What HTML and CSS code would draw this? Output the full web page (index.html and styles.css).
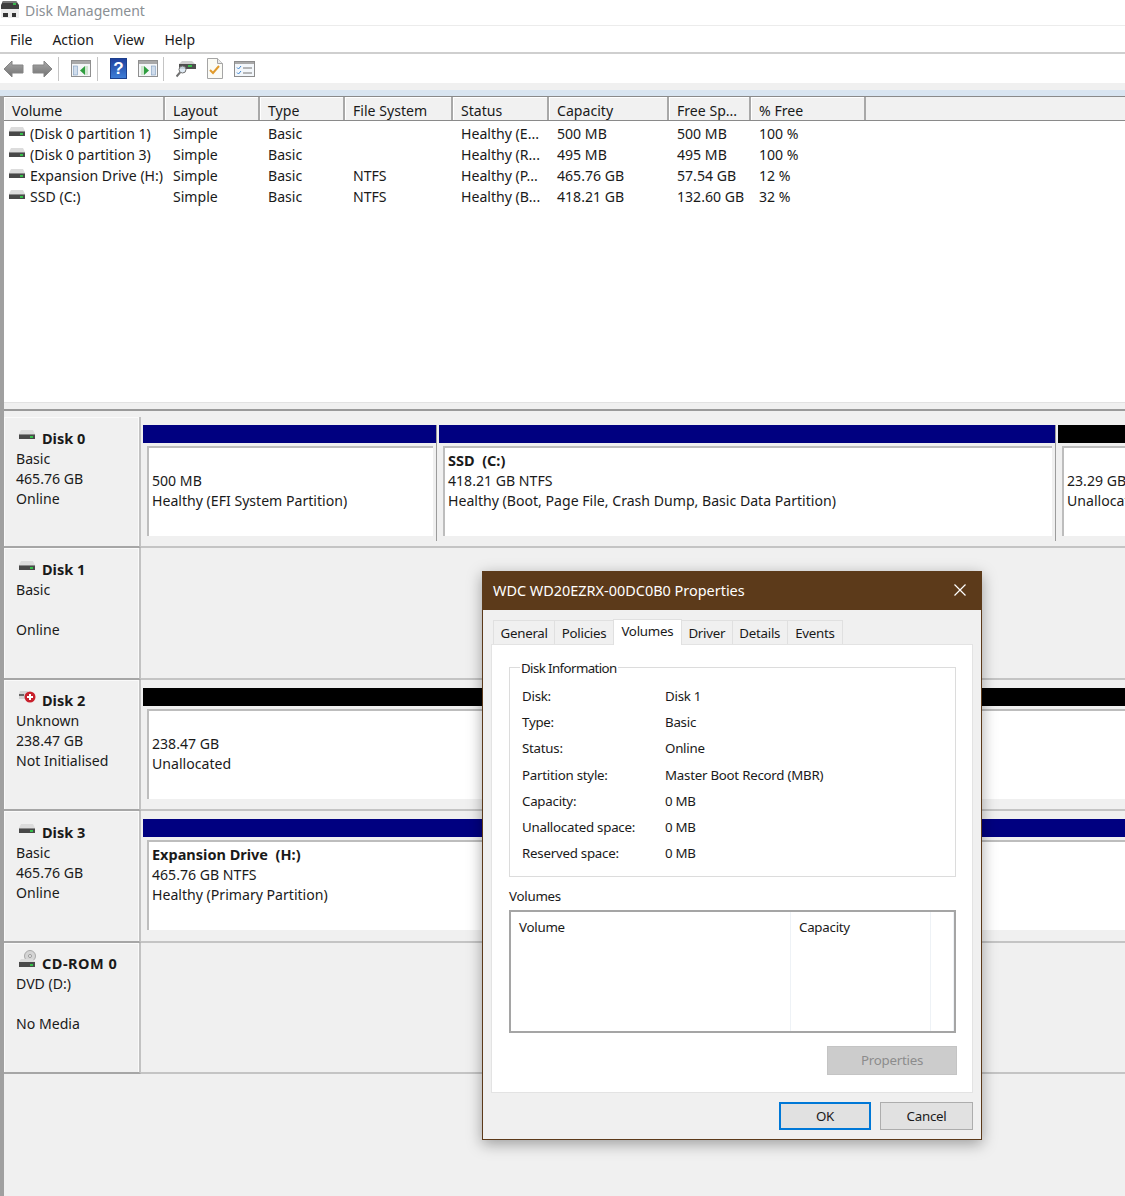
FILE: index.html
```html
<!DOCTYPE html>
<html lang="en">

<head>
    <meta charset="UTF-8">
    <meta name="viewport" content="width=device-width, initial-scale=1.0">
    <title>Disk Management</title>
    <link rel="stylesheet" href="styles.css">
</head>

<body>
    <svg class="defs" width="0" height="0">
        <defs>
            <linearGradient id="arrowfill" x1="0" y1="0" x2="0" y2="1">
                <stop offset="0" stop-color="#a8a8a8" />
                <stop offset="1" stop-color="#717171" />
            </linearGradient>
            <linearGradient id="helpfill" x1="0" y1="0" x2="0" y2="1">
                <stop offset="0" stop-color="#1e3f9c" />
                <stop offset="1" stop-color="#3f7fd8" />
            </linearGradient>
        </defs>
        <symbol id="disk" viewBox="0 0 18 12">
            <path d="M3 1h12l2 4H1z" fill="#dcdcdc" />
            <rect x="1" y="5" width="16" height="5" fill="#484848" />
            <rect x="1" y="5" width="16" height="1" fill="#8a8a8a" />
            <rect x="12" y="7" width="3" height="2" fill="#35c04a" />
        </symbol>
    </svg>

    <div class="titlebar">
        <svg class="appicon" width="20" height="19" viewBox="0 0 20 19">
            <path d="M3 1h13l3 4v4H1V5z" fill="#3f3f3f" />
            <path d="M3 1h13l1.500 2H2z" fill="#777" />
            <rect x="13" y="3" width="3" height="2" fill="#38b84c" />
            <rect x="1" y="9" width="18" height="9" fill="#ececec" />
            <rect x="3" y="13" width="5" height="4" fill="#333" />
            <rect x="12" y="13" width="4" height="4" fill="#333" />
        </svg>
        <span>Disk Management</span>
    </div>

    <div class="menubar">
        <span>File</span>
        <span>Action</span>
        <span>View</span>
        <span>Help</span>
    </div>

    <div class="toolbar">
        <div class="toolgroup arrows">
            <svg width="21" height="18" viewBox="0 0 21 18">
                <path d="M1 9l8-8v4h11v8H9v4z" fill="url(#arrowfill)" stroke="#858585" stroke-linejoin="round" />
            </svg>
            <svg width="21" height="18" viewBox="0 0 21 18">
                <path d="M20 9l-8-8v4H1v8h11v4z" fill="url(#arrowfill)" stroke="#858585" stroke-linejoin="round" />
            </svg>
        </div>
        <i class="sep"></i>
        <div class="toolgroup single">
            <svg width="20" height="17" viewBox="0 0 20 17">
                <rect x=".5" y=".5" width="19" height="16" fill="#f4f6f8" stroke="#8f8f8f" />
                <rect x="1" y="1" width="18" height="3" fill="#a9a9a9" />
                <rect x="2.500" y="6" width="4" height="9" fill="#cfdcec" stroke="#7f9dbf" stroke-width=".6" />
                <path d="M14 6v9l-5-4.500z" fill="#2f9e3f" />
                <rect x="14" y="6" width="3" height="9" fill="#cfe6cf" />
            </svg>
        </div>
        <i class="sep"></i>
        <div class="toolgroup">
            <svg width="17" height="21" viewBox="0 0 17 21">
                <rect x=".5" y=".5" width="16" height="20" fill="url(#helpfill)" stroke="#1c3f8c" />
                <text x="8.500" y="16" class="helpmark">?</text>
            </svg>
            <svg width="20" height="17" viewBox="0 0 20 17">
                <rect x=".5" y=".5" width="19" height="16" fill="#f4f6f8" stroke="#8f8f8f" />
                <rect x="1" y="1" width="18" height="3" fill="#a9a9a9" />
                <rect x="13.500" y="6" width="4" height="9" fill="#cfdcec" stroke="#7f9dbf" stroke-width=".6" />
                <rect x="3" y="6" width="3" height="9" fill="#cfe6cf" />
                <path d="M6 6v9l5-4.500z" fill="#2f9e3f" />
            </svg>
        </div>
        <i class="sep"></i>
        <div class="toolgroup">
            <svg width="20" height="19" viewBox="0 0 20 19">
                <path d="M6 2h10l3 3H3z" fill="#cfcfcf" />
                <rect x="3" y="5" width="17" height="5" fill="#4f4f4f" />
                <rect x="12" y="6" width="4" height="2" fill="#35c04a" />
                <circle cx="6.500" cy="10.500" r="3.500" fill="#dbe7f3" fill-opacity=".85" stroke="#707070" />
                <path d="M4 13.500L.5 17.500" stroke="#707070" stroke-width="2" />
            </svg>
            <svg width="16" height="21" viewBox="0 0 16 21">
                <path d="M.5.500h10l5 5v15H.5z" fill="#fbfbf6" stroke="#a5a5a5" />
                <path d="M10.500.500v5h5" fill="#e8e8e8" stroke="#a5a5a5" />
                <path d="M3 12l3 3 6-7" fill="none" stroke="#e09a2b" stroke-width="2" />
            </svg>
            <svg width="21" height="16" viewBox="0 0 21 16">
                <rect x=".5" y=".5" width="20" height="15" fill="#f3f7fb" stroke="#8c8c8c" />
                <rect x="1" y="1" width="19" height="2" fill="#a9a9a9" />
                <path d="M3 6.500l1.500 1.500L7 5M3 11.500l1.500 1.500L7 10" fill="none" stroke="#3f86d0" />
                <path d="M9 7h9M9 12h9" stroke="#777" />
            </svg>
        </div>
    </div>

    <div class="topstrip"></div>

    <div class="console">
        <table class="volumes">
            <thead>
                <tr>
                    <th class="c-vol">Volume</th>
                    <th class="c-lay">Layout</th>
                    <th class="c-typ">Type</th>
                    <th class="c-fs">File System</th>
                    <th class="c-sta">Status</th>
                    <th class="c-cap">Capacity</th>
                    <th class="c-fre">Free Sp...</th>
                    <th class="c-pct">% Free</th>
                </tr>
            </thead>
            <tbody>
                <tr>
                    <td class="volname"><svg class="rowicon"><use href="#disk" /></svg>(Disk 0 partition 1)</td>
                    <td>Simple</td>
                    <td>Basic</td>
                    <td></td>
                    <td>Healthy (E...</td>
                    <td>500 MB</td>
                    <td>500 MB</td>
                    <td>100 %</td>
                </tr>
                <tr>
                    <td class="volname"><svg class="rowicon"><use href="#disk" /></svg>(Disk 0 partition 3)</td>
                    <td>Simple</td>
                    <td>Basic</td>
                    <td></td>
                    <td>Healthy (R...</td>
                    <td>495 MB</td>
                    <td>495 MB</td>
                    <td>100 %</td>
                </tr>
                <tr>
                    <td class="volname"><svg class="rowicon"><use href="#disk" /></svg>Expansion Drive (H:)</td>
                    <td>Simple</td>
                    <td>Basic</td>
                    <td>NTFS</td>
                    <td>Healthy (P...</td>
                    <td>465.76 GB</td>
                    <td>57.54 GB</td>
                    <td>12 %</td>
                </tr>
                <tr>
                    <td class="volname"><svg class="rowicon"><use href="#disk" /></svg>SSD (C:)</td>
                    <td>Simple</td>
                    <td>Basic</td>
                    <td>NTFS</td>
                    <td>Healthy (B...</td>
                    <td>418.21 GB</td>
                    <td>132.60 GB</td>
                    <td>32 %</td>
                </tr>
            </tbody>
        </table>

        <div class="splitter"></div>

        <div class="diskrow">
            <div class="diskinfo">
                <div class="diskname"><svg class="diskicon"><use href="#disk" /></svg>Disk 0</div>
                <div>Basic</div>
                <div>465.76 GB</div>
                <div>Online</div>
            </div>
            <div class="parts">
                <div class="part p1">
                    <div class="bar navy"></div>
                    <div class="partbox">
                        <div>&nbsp;</div>
                        <div>500 MB</div>
                        <div>Healthy (EFI System Partition)</div>
                    </div>
                </div>
                <div class="part p2">
                    <div class="bar navy"></div>
                    <div class="partbox">
                        <div class="partname">SSD&nbsp; (C:)</div>
                        <div>418.21 GB NTFS</div>
                        <div>Healthy (Boot, Page File, Crash Dump, Basic Data Partition)</div>
                    </div>
                </div>
                <div class="part p3">
                    <div class="bar black"></div>
                    <div class="partbox">
                        <div>&nbsp;</div>
                        <div>23.29 GB</div>
                        <div>Unallocated</div>
                    </div>
                </div>
            </div>
        </div>

        <div class="diskrow">
            <div class="diskinfo">
                <div class="diskname"><svg class="diskicon"><use href="#disk" /></svg>Disk 1</div>
                <div>Basic</div>
                <div>&nbsp;</div>
                <div>Online</div>
            </div>
            <div class="parts"></div>
        </div>

        <div class="diskrow">
            <div class="diskinfo">
                <div class="diskname">
                    <svg class="diskicon" viewBox="0 0 18 12">
                        <path d="M2 0h8l1 3v5H1V3z" fill="#d4d4d4" />
                        <rect x="1" y="3" width="5" height="2" fill="#666" />
                        <circle cx="12" cy="6" r="5.500" fill="#c8202c" />
                        <rect x="9" y="5" width="6" height="2" fill="#fff" />
                        <rect x="11" y="3" width="2" height="6" fill="#fff" />
                    </svg>Disk 2
                </div>
                <div>Unknown</div>
                <div>238.47 GB</div>
                <div>Not Initialised</div>
            </div>
            <div class="parts">
                <div class="part pfull">
                    <div class="bar black"></div>
                    <div class="partbox">
                        <div>&nbsp;</div>
                        <div>238.47 GB</div>
                        <div>Unallocated</div>
                    </div>
                </div>
            </div>
        </div>

        <div class="diskrow">
            <div class="diskinfo">
                <div class="diskname"><svg class="diskicon"><use href="#disk" /></svg>Disk 3</div>
                <div>Basic</div>
                <div>465.76 GB</div>
                <div>Online</div>
            </div>
            <div class="parts">
                <div class="part pfull">
                    <div class="bar navy"></div>
                    <div class="partbox">
                        <div class="partname">Expansion Drive&nbsp; (H:)</div>
                        <div>465.76 GB NTFS</div>
                        <div>Healthy (Primary Partition)</div>
                    </div>
                </div>
            </div>
        </div>

        <div class="diskrow">
            <div class="diskinfo">
                <div class="diskname cdname">
                    <svg class="diskicon cdicon" viewBox="0 0 18 18">
                        <circle cx="12" cy="6" r="5.500" fill="#d4d4d4" stroke="#a8a8a8" />
                        <circle cx="12" cy="6" r="1.500" fill="#f4f4f4" stroke="#999" />
                        <path d="M3 9h12l2 3H1z" fill="#dcdcdc" />
                        <rect x="1" y="12" width="16" height="5" fill="#4a4a4a" />
                        <rect x="12" y="14" width="3" height="2" fill="#35c04a" />
                    </svg>CD-ROM 0
                </div>
                <div>DVD (D:)</div>
                <div>&nbsp;</div>
                <div>No Media</div>
            </div>
            <div class="parts"></div>
        </div>
    </div>

    <div class="dialog">
        <div class="dlgtitle">
            <span>WDC WD20EZRX-00DC0B0 Properties</span>
            <svg width="12" height="12" viewBox="0 0 12 12">
                <path d="M.5.500l11 11M11.500.500l-11 11" stroke="#fff" stroke-width="1.200" />
            </svg>
        </div>
        <div class="dlgbody">
            <div class="tabs">
                <span class="tab">General</span>
                <span class="tab">Policies</span>
                <span class="tab active">Volumes</span>
                <span class="tab">Driver</span>
                <span class="tab">Details</span>
                <span class="tab events">Events</span>
            </div>
            <div class="tabpane">
                <fieldset class="group">
                    <legend>Disk Information</legend>
                    <div class="inforow"><span>Disk:</span><span>Disk 1</span></div>
                    <div class="inforow"><span>Type:</span><span>Basic</span></div>
                    <div class="inforow"><span>Status:</span><span>Online</span></div>
                    <div class="inforow"><span>Partition style:</span><span>Master Boot Record (MBR)</span></div>
                    <div class="inforow"><span>Capacity:</span><span>0 MB</span></div>
                    <div class="inforow"><span>Unallocated space:</span><span>0 MB</span></div>
                    <div class="inforow"><span>Reserved space:</span><span>0 MB</span></div>
                </fieldset>
                <div class="vollabel">Volumes</div>
                <div class="vollist">
                    <div class="volcol first">Volume</div>
                    <div class="volcol second">Capacity</div>
                    <div class="volcol"></div>
                </div>
                <div class="propsrow"><button class="propsbtn" disabled>Properties</button></div>
            </div>
            <div class="dlgbtns">
                <button class="btn okbtn">OK</button>
                <button class="btn">Cancel</button>
            </div>
        </div>
    </div>
</body>

</html>
```

FILE: styles.css
```css
* {
    padding: 0;
    margin: 0;
    box-sizing: border-box;
}

html,
body {
    height: 1196px;
    overflow: hidden;
}

body {
    position: relative;
    background-color: #f0f0f0;
    font-family: "Noto Sans", "Open Sans", sans-serif;
    font-size: 14.100px;
    color: #1a1a1a;
}

.defs {
    position: absolute;
}

.titlebar {
    height: 26px;
    background-color: white;
    border-bottom: 1px solid #ececec;
    display: flex;
    align-items: flex-start;
    gap: 5px;
    color: #8a8f94;
    font-size: 14px;
}

.titlebar span {
    line-height: 22px;
}

.appicon {
    flex: none;
}

.menubar {
    height: 28px;
    background-color: white;
    border-bottom: 2px solid #cfcfcf;
    display: flex;
    align-items: center;
    gap: 20px;
    padding-left: 10px;
    font-size: 14px;
}

.toolbar {
    height: 29px;
    background-color: white;
    display: flex;
    align-items: center;
    padding-left: 3px;
}

.toolgroup {
    display: flex;
    align-items: center;
    gap: 11px;
}

.toolgroup.arrows {
    gap: 8px;
}

.toolgroup.single {
    margin-right: 1px;
}

.sep {
    width: 1px;
    height: 24px;
    background-color: #c4c4c4;
    margin: 0 12px 0 5px;
}

.helpmark {
    font-family: "Liberation Sans", sans-serif;
    font-size: 17px;
    font-weight: bold;
    fill: white;
    text-anchor: middle;
}

.topstrip {
    height: 13px;
    background: linear-gradient(#f0f0f0 0, #f0f0f0 7px, #d9e5f1 7px);
}

.console {
    border-left: 4px solid #a0a0a0;
    height: 1113px;
}

.volumes {
    background-color: white;
    height: 306px;
    display: block;
    border-collapse: collapse;
}

.volumes thead {
    display: block;
    height: 25px;
    background-color: #f1f1f1;
    border-top: 1px solid #8a8a8a;
    border-bottom: 1px solid #8a8a8a;
}

.volumes tbody {
    display: block;
    padding-top: 2px;
}

.volumes tr {
    display: flex;
}

.volumes th {
    height: 23px;
    font-weight: normal;
    text-align: left;
    line-height: 27px;
    padding-left: 8px;
    border-right: 2px solid #a8a8a8;
    box-shadow: inset 1px 1px 0 white;
    overflow: hidden;
}

.volumes td {
    height: 21px;
    line-height: 21px;
    padding-left: 8px;
    white-space: nowrap;
}

.c-vol,
.volumes td:nth-child(1) {
    width: 161px;
}

.c-lay,
.volumes td:nth-child(2) {
    width: 95px;
}

.c-typ,
.volumes td:nth-child(3) {
    width: 85px;
}

.c-fs,
.volumes td:nth-child(4) {
    width: 108px;
}

.c-sta,
.volumes td:nth-child(5) {
    width: 96px;
}

.c-cap,
.volumes td:nth-child(6) {
    width: 120px;
}

.c-fre,
.volumes td:nth-child(7) {
    width: 82px;
}

.c-pct,
.volumes td:nth-child(8) {
    width: 115px;
}

.volumes td.volname {
    padding-left: 4px;
    display: flex;
    align-items: center;
    overflow: visible;
}

.rowicon {
    width: 18px;
    height: 12px;
    margin-right: 4px;
    margin-top: -3px;
    flex: none;
}

.splitter {
    height: 9px;
    background-color: #f0f0f0;
    border-bottom: 2px solid #9a9a9a;
    box-shadow: inset 0 1px 0 #e2e2e2;
    margin-bottom: 6px;
}

.diskrow {
    display: flex;
    height: 131.400px;
}

.diskinfo {
    width: 137px;
    flex: none;
    padding: 10.500px 0 0 12px;
    line-height: 20px;
    border-right: 2px solid #c2c2c2;
    border-bottom: 2px solid #a6a6a6;
    box-shadow: inset 1px 1px 0 #fafafa, inset -1px 0 0 #fafafa;
}

.diskname {
    font-weight: bold;
    font-size: 14.500px;
    display: flex;
    align-items: center;
    padding-left: 2px;
    margin-bottom: 1px;
}

.cdname {
    letter-spacing: 0.5px;
}

.diskicon {
    width: 18px;
    height: 12px;
    margin-right: 6px;
    margin-top: -6px;
    flex: none;
}

.cdicon {
    height: 18px;
    margin-top: -8px;
}

.parts {
    flex: 1;
    min-width: 0;
    display: flex;
    padding-top: 8px;
    overflow: hidden;
    border-bottom: 2px solid #c4c4c4;
}

.part {
    flex: none;
    height: 116px;
    margin-left: 2px;
    border-right: 1px solid #9c9c9c;
}

.p1 {
    width: 294px;
}

.p2 {
    width: 617px;
}

.p3 {
    width: 200px;
}

.pfull {
    width: 1000px;
}

.bar {
    height: 18px;
}

.navy {
    background-color: #000080;
}

.black {
    background-color: black;
}

.partbox {
    height: 90px;
    margin: 3px 3px 0 4px;
    padding: 3px 0 0 3px;
    background-color: white;
    border-top: 2px solid #bdbdbd;
    border-left: 2px solid #bdbdbd;
    line-height: 20px;
    white-space: nowrap;
}

.partname {
    font-weight: bold;
    font-size: 14.500px;
    line-height: 18px;
    margin-bottom: 2px;
}

.dialog {
    position: absolute;
    left: 482px;
    top: 571px;
    width: 500px;
    height: 569px;
    background-color: #f0f0f0;
    border: 1px solid #5c3a1a;
    box-shadow: 0 4px 14px rgba(0, 0, 0, 0.35);
    font-size: 13.300px;
    letter-spacing: -0.25px;
}

.dlgtitle {
    height: 38px;
    background-color: #5c3a1a;
    color: white;
    display: flex;
    align-items: center;
    justify-content: space-between;
    padding: 0 15px 2px 10px;
    font-size: 14.450px;
    letter-spacing: 0;
}

.dlgbody {
    padding: 0 8px;
}

.tabs {
    height: 34px;
    display: flex;
    align-items: flex-end;
    padding-left: 2px;
}

.tab {
    height: 24px;
    line-height: 24px;
    padding: 0 6.500px;
    background-color: #f0f0f0;
    border: 1px solid #e0e0e0;
    border-bottom: none;
    margin-right: -1px;
}

.tab.events {
    padding: 0 7.500px;
}

.tab.active {
    height: 26px;
    line-height: 23px;
    padding: 0 7.500px;
    background-color: white;
    position: relative;
    z-index: 1;
    margin-bottom: -1px;
}

.tabpane {
    height: 449px;
    background-color: white;
    border: 1px solid #e3e3e3;
    padding: 14px 16px 0 17px;
}

.group {
    height: 218px;
    border: 1px solid #dcdcdc;
    padding: 8px 12px 0;
}

.group legend {
    padding: 2px 1px 0;
    margin-left: -2px;
    line-height: 14px;
    letter-spacing: -0.6px;
}

.inforow {
    display: flex;
    height: 26.200px;
    line-height: 26px;
}

.inforow span:first-child {
    width: 143px;
}

.vollabel {
    margin-top: 10px;
    line-height: 18px;
}

.vollist {
    margin-top: 5px;
    height: 123px;
    border: 2px solid #a5a5a5;
    display: flex;
}

.volcol {
    border-right: 1px solid #eef2f6;
    padding: 6px 0 0 8px;
    line-height: 18px;
    flex: 1;
}

.volcol.first {
    width: 280px;
    flex: none;
}

.volcol.second {
    width: 140px;
    flex: none;
}

.propsrow {
    display: flex;
    justify-content: flex-end;
    margin: 13px -1px 0 0;
}

.propsbtn {
    width: 130px;
    height: 29px;
    background-color: #cccccc;
    border: 1px solid #c4c4c4;
    color: #8c8c8c;
    font: inherit;
    letter-spacing: inherit;
    padding-bottom: 2px;
}

.dlgbtns {
    display: flex;
    justify-content: flex-end;
    gap: 9px;
    margin-top: 9px;
}

.btn {
    width: 93px;
    height: 28px;
    background-color: #e1e1e1;
    border: 1px solid #adadad;
    font: inherit;
    letter-spacing: inherit;
    color: #1a1a1a;
}

.okbtn {
    border: 2px solid #0078d7;
    width: 92px;
}
```
